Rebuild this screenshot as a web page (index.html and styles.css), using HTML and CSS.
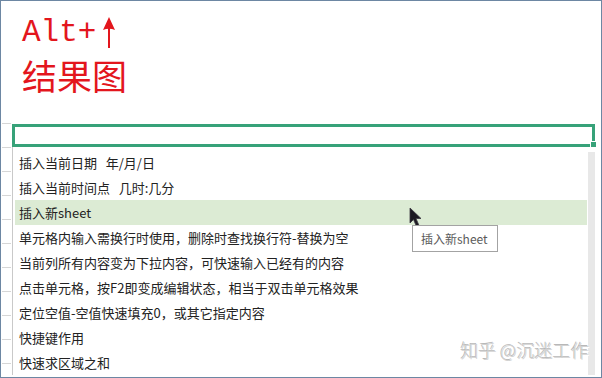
FILE: index.html
```html
<!DOCTYPE html>
<html lang="zh-CN">
<head>
    <meta charset="UTF-8">
    <meta name="viewport" content="width=device-width, initial-scale=1.0">
    <title>Alt+↑ 结果图</title>
    <link rel="stylesheet" href="styles.css">
</head>
<body>
    <div class="frame">
        <div class="title">
            <div class="keys">
                <span>Alt+</span>
                <svg class="arrow" width="14" height="32" viewBox="0 0 14 32">
                    <path d="M7 0 L13 13 Q7 10.5 1 13 Z" fill="#e3161d"/>
                    <rect x="6" y="10" width="2" height="21" fill="#e3161d"/>
                </svg>
            </div>
            <div class="caption">结果图</div>
        </div>

        <div class="sheet">
            <div class="gutter"></div>
            <div class="main">
                <div class="cell"></div>
                <div class="dropdown">
                    <ul class="items">
                        <li>插入当前日期   年/月/日</li>
                        <li>插入当前时间点   几时:几分</li>
                        <li class="active">插入新sheet</li>
                        <li>单元格内输入需换行时使用，删除时查找换行符-替换为空</li>
                        <li>当前列所有内容变为下拉内容，可快速输入已经有的内容</li>
                        <li>点击单元格，按F2即变成编辑状态，相当于双击单元格效果</li>
                        <li>定位空值-空值快速填充0，或其它指定内容</li>
                        <li>快捷键作用</li>
                        <li>快速求区域之和</li>
                    </ul>
                    <div class="scroll"></div>
                </div>
            </div>
        </div>

        <!-- overlays -->
        <svg class="cursor" width="13" height="21" viewBox="0 0 13 21">
            <path d="M1 1 L1 16 L4.5 12.5 L7.5 19.5 L10 18.5 L7 11.5 L12 11.5 Z" fill="#1c1a22" stroke="#3a3640" stroke-width="0.8"/>
        </svg>
        <div class="tooltip">插入新sheet</div>
        <div class="watermark">知乎 @沉迷工作</div>
    </div>
</body>
</html>
```

FILE: styles.css
```css
body {
    margin: 0;
    padding: 0;
    background-color: #fff;
    font-family: "Noto Sans CJK SC", "Noto Sans", sans-serif;
}

.frame {
    position: relative;
    width: 602px;
    height: 378px;
    box-sizing: border-box;
    border: 1px solid #6d87a3;
    overflow: hidden;
    background-color: #fff;
}

.title {
    height: 122px;
    box-sizing: border-box;
    padding: 15px 0 0 21px;
    color: #e3161d;
}

.keys {
    display: flex;
    align-items: flex-start;
    height: 34px;
    font-family: "Liberation Mono", monospace;
    font-size: 31px;
    line-height: 34px;
}

.arrow {
    margin: 1px 0 0 6px;
}

.caption {
    margin-top: 3px;
    font-size: 35px;
    line-height: 44px;
}

.sheet {
    display: flex;
}

.gutter {
    width: 11px;
    height: 260px;
    background-image: repeating-linear-gradient(to bottom, #d6d6d6 0, #d6d6d6 1px, transparent 1px, transparent 24px);
    background-size: 9px 100%;
    background-repeat: no-repeat;
    background-position: 1px 0;
}

.main {
    flex: 1;
}

.cell {
    position: relative;
    height: 23px;
    margin: 1px 6px 0 0;
    box-sizing: border-box;
    border: 3px solid #37a279;
}

.cell::after {
    content: "";
    position: absolute;
    right: -5px;
    bottom: -4px;
    width: 5px;
    height: 5px;
    background-color: #37a279;
    border: 1px solid #fff;
}

.dropdown {
    display: flex;
    margin-right: 6px;
    border-left: 1px solid #c9c9c9;
}

.items {
    flex: 1;
    list-style: none;
    margin: 0;
    padding: 3px 1px 0 2px;
}

.items li {
    height: 25px;
    line-height: 25px;
    padding-left: 4px;
    font-size: 13px;
    color: #222;
    white-space: pre;
}

.items li.active {
    background-color: #dcebd4;
}

.scroll {
    width: 7px;
    margin-top: 5px;
    background-color: #e8e8e8;
}

.cursor {
    position: absolute;
    left: 408px;
    top: 206px;
}

.tooltip {
    position: absolute;
    left: 411px;
    top: 224px;
    width: 86px;
    height: 27px;
    box-sizing: border-box;
    border: 1px solid #a3a3a3;
    background-color: #fff;
    padding-left: 8px;
    font-size: 12px;
    line-height: 25px;
    color: #5a5a5a;
}

.watermark {
    position: absolute;
    right: 12px;
    bottom: 14px;
    font-size: 18px;
    font-weight: 300;
    color: #d2d2d2;
    text-shadow: -1px -1px 0 #b8b8b8, 1px 1px 0 #fff;
}
```
